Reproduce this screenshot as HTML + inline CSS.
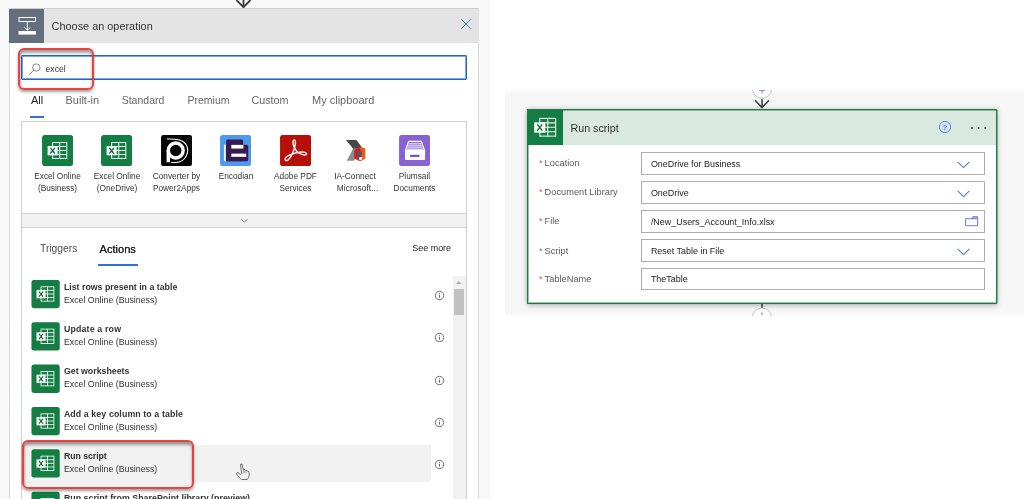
<!DOCTYPE html>
<html lang="en">
<head>
<meta charset="utf-8">
<title>Choose an operation - Run script</title>
<style>
*{box-sizing:border-box;margin:0;padding:0}
html,body{width:1024px;height:499px;overflow:hidden;background:#fff}
body{position:relative;font-family:"Liberation Sans",sans-serif;color:#333;-webkit-font-smoothing:antialiased}
.abs{position:absolute}
.t{position:absolute;white-space:nowrap;line-height:1}
#left{will-change:transform;position:absolute;left:0;top:0;width:490px;height:499px;background:#f8f8f8;overflow:hidden}
#panel{position:absolute;left:9px;top:8px;width:470px;height:500px;background:#fff;border-left:1px solid #d6d6d6;border-right:1px solid #d6d6d6}
#hdr{position:absolute;left:-1px;top:0;width:470px;height:34.5px;background:#e4e4e4;border-top:1px solid #cfcfcf}
#hico{position:absolute;left:0;top:0;width:35px;height:33.5px;background:#646e7c}
#search{position:absolute;left:21px;top:55px;width:445.5px;height:24.5px;border:1px solid #2565d0;box-shadow:inset 0 0 0 1px rgba(37,101,208,.6);background:#fff;border-radius:1px}
.red{position:absolute;border:2px solid #e8433f;border-radius:6px;box-shadow:0 2px 3px 0 rgba(0,0,0,.38), inset 0 3px 3px 0 rgba(0,0,0,.36), inset 1px 0 2px 0 rgba(0,0,0,.12)}
.tab{font-size:11px;color:#666}
#cbox{position:absolute;left:21px;top:121px;width:445.5px;height:93px;border:1px solid #cfcfcf;background:#fff}
#cbar{position:absolute;left:21px;top:213px;width:445.5px;height:14.5px;border:1px solid #cfcfcf;background:#f2f2f2}
#obox{position:absolute;left:21px;top:226.5px;width:445.5px;height:300px;border:1px solid #cfcfcf;background:#fff}
.cl{position:absolute;font-size:8.3px;line-height:12px;text-align:center;width:70px;color:#333;white-space:nowrap}
.ic{position:absolute;width:31.3px;height:31.2px;border-radius:2px}
.li{position:absolute;left:31px;width:29px;height:30px}
.lt{position:absolute;left:63.9px;font-size:8.8px;font-weight:bold;color:#333;white-space:nowrap;line-height:1}
.ls{position:absolute;left:63.9px;margin-top:.7px;font-size:8.8px;color:#333;white-space:nowrap;line-height:1}
#right{will-change:transform;position:absolute;left:505px;top:90px;width:519px;height:226px;background:linear-gradient(#fbfbfb 0,#f6f6f6 4px,#f6f6f6 221px,#fafafa 226px);overflow:hidden}
#card{position:absolute;left:22px;top:19px;width:470px;height:195px;background:#fff;border:1.5px solid #1f7a47;box-shadow:0 1px 5px rgba(0,0,0,.32)}
#card:after{content:"";position:absolute;left:0;top:0;right:-2px;bottom:0;border-right-color:rgba(31,122,71,.55);border:1px solid rgba(31,122,71,.45);pointer-events:none}
#chdr{position:absolute;left:0;top:0;width:100%;height:35px;background:#d9e9e0}
#cico{position:absolute;left:0;top:0;width:35px;height:35px;background:#147d43}
.fl{position:absolute;left:34px;margin-top:.8px;font-size:9.25px;color:#5a5a5a;white-space:nowrap;line-height:1}
.fl b{color:#dc5050;font-weight:normal;margin-right:2px}
.fi{position:absolute;left:135.5px;width:344px;height:22px;border:1px solid #adadad;background:#fff}
.fv{position:absolute;left:9.4px;top:7.2px;font-size:8.95px;color:#222;white-space:nowrap;line-height:1}
</style>
</head>
<body>
<svg width="0" height="0" style="position:absolute">
<defs>
<g id="xl">
<rect x="0" y="0" width="31" height="31" rx="2.6" fill="#147d43"/>
<g fill="none" stroke="#e9f5ee" stroke-width="1">
<rect x="10.5" y="7.5" width="14.1" height="15.8"/>
<path d="M17.6 7.5V23.3M10.5 11.45H24.6M10.5 15.4H24.6M10.5 19.35H24.6"/>
</g>
<rect x="5.5" y="11" width="10" height="9.2" fill="#f4faf6"/>
<path d="M8.3 12.8L12.7 18.4M12.7 12.8L8.3 18.4" stroke="#1c6a40" stroke-width="1.3" fill="none"/>
</g>
</defs>
</svg>

<div id="left">
<svg class="abs" style="left:233px;top:0" width="21" height="9" viewBox="0 0 21 9"><path d="M3.5 0L10.5 7.2L17.5 0M10.5 0V7" fill="none" stroke="#3c3c3c" stroke-width="1.8"/></svg>
<div id="panel">
<div id="hdr">
<div id="hico"><svg class="abs" style="left:0.7px;top:0" width="35" height="35" viewBox="0 0 35 35"><rect x="9" y="8.5" width="16.5" height="4" fill="none" stroke="#fff" stroke-width="1"/><rect x="8.5" y="22" width="17.5" height="3.6" fill="#fff"/><path d="M17.3 12.5V21M14.3 18.3L17.3 21.3L20.3 18.3" fill="none" stroke="#fff" stroke-width="1"/></svg></div>
<div class="t" id="htitle" style="left:42.6px;top:11.5px;font-size:10.9px;color:#333">Choose an operation</div>
<svg class="abs" style="left:451.5px;top:9.7px" width="10" height="10" viewBox="0 0 10 10"><path d="M0.3 0.3L9.7 9.7M9.7 0.3L0.3 9.7" stroke="#4a78d6" stroke-width="1" fill="none"/></svg>
</div>
</div>

<div id="search">
<svg class="abs" style="left:6px;top:6px" width="14" height="14" viewBox="0 0 14 14"><circle cx="8.3" cy="5.5" r="3.7" fill="none" stroke="#777" stroke-width="0.9"/><path d="M5.6 8.2L1 12.8" stroke="#777" stroke-width="1"/></svg>
<div class="t" id="sq" style="left:23.6px;top:8.5px;font-size:8.6px;color:#333">excel</div>
</div>

<div class="red" style="left:17.5px;top:48.2px;width:76.5px;height:41.4px"></div>
<div class="t tab" id="tab1" style="left:31px;top:95px;color:#222">All</div>
<div class="t tab" id="tab2" style="left:65.5px;top:95px">Built-in</div>
<div class="t tab" id="tab3" style="left:121.7px;top:95px;font-size:10.5px">Standard</div>
<div class="t tab" id="tab4" style="left:187.5px;top:95px;font-size:10.5px">Premium</div>
<div class="t tab" id="tab5" style="left:251.5px;top:95px;font-size:10.75px">Custom</div>
<div class="t tab" id="tab6" style="left:312px;top:95px">My clipboard</div>
<div class="abs" style="left:30.2px;top:116px;width:14.2px;height:1.7px;background:#2b6fe0"></div>

<div id="cbox"></div>
<svg class="ic" style="left:41.5px;top:135px" viewBox="0 0 31 31"><use href="#xl"/></svg>
<div class="cl" style="left:22.5px;top:170px">Excel Online<br>(Business)</div>
<svg class="ic" style="left:101px;top:135px" viewBox="0 0 31 31"><use href="#xl"/></svg>
<div class="cl" style="left:82.0px;top:170px">Excel Online<br>(OneDrive)</div>
<svg class="ic" style="left:160.5px;top:135px" viewBox="0 0 31 31"><rect width="31" height="31" rx="1.5" fill="#030303"/><circle cx="14.6" cy="15.4" r="7.4" fill="none" stroke="#fff" stroke-width="3.4"/><path d="M7.2 15.4V27" fill="none" stroke="#fff" stroke-width="3.4"/><path d="M5.8 4C12 4.2 20.5 3.4 24.6 9A12 12 0 0 1 14.6 27.3H10" fill="none" stroke="#fff" stroke-width="1.1"/></svg>
<div class="cl" style="left:141.5px;top:170px">Converter by<br>Power2Apps</div>
<svg class="ic" style="left:220px;top:135px" viewBox="0 0 31 31"><rect width="31" height="31" rx="2" fill="#4b9af0"/><rect x="6.1" y="4.5" width="16.8" height="21.5" rx="1.5" fill="#371a50"/><rect x="6.1" y="9.6" width="21.9" height="16.4" rx="1.5" fill="#371a50"/><rect x="3.8" y="9.6" width="1.9" height="16.4" fill="#eef3fd"/><rect x="11.2" y="9.8" width="12" height="3.7" fill="#fff"/><rect x="11.2" y="18.5" width="14.8" height="3.2" fill="#fff"/></svg>
<div class="cl" style="left:201.0px;top:170px">Encodian</div>
<svg class="ic" style="left:279.5px;top:135px" viewBox="0 0 31 31"><rect width="31" height="31" rx="2" fill="#b50f08"/><path d="M5.2 24.6C4.3 22.5 8.5 20 12 19C13.6 15.5 15.5 10 15.3 7C15.1 4.4 13 4.4 12.9 6.8C12.8 10 15 14.5 17.5 17.3C20.5 16.6 25.6 16.4 26.3 18.4C27 20.6 22.5 20.4 17.5 17.3C15.5 17.7 13.5 18.3 12 19C10 23 6.8 27.2 5.2 24.6Z" fill="none" stroke="#fdeceb" stroke-width="1.5" stroke-linejoin="round"/></svg>
<div class="cl" style="left:260.5px;top:170px">Adobe PDF<br>Services</div>
<svg class="ic" style="left:339px;top:135px" viewBox="0 0 31 31"><path d="M7 4.9H17.1L23 12.7L14.8 25.6H7.7L14 13.5Z" fill="#8c8c8c"/><path d="M7 4.9H17.1L23 12.7L14 13.5Z" fill="#474747"/><path d="M15.2 15L21 11.6L26.1 13.5V23.5L21 26L15.2 23Z" fill="#e85a10"/><path d="M15.2 15L21 11.6V26L15.2 23Z" fill="#c8202a"/><path d="M17.8 16.5L20.8 15.2L22.6 16.6V21.5L20.6 22.8L17.8 21.5Z" fill="#5d4a6c"/><path d="M19.5 22.5L23 21.5V24L20.5 25Z" fill="#fff"/></svg>
<div class="cl" style="left:320.0px;top:170px">IA-Connect<br><span style="position:relative;left:2.6px;letter-spacing:.08px">Microsoft...</span></div>
<svg class="ic" style="left:398.5px;top:135px" viewBox="0 0 31 31"><rect width="31" height="31" rx="2" fill="#8862d2"/><path d="M9.6 6.3H22.1L25.4 15.5H6.3Z" fill="#9472d6" stroke="#fff" stroke-width="1.2"/><path d="M9.5 8.8H22.2M8.9 10.8H22.9M8.2 12.8H23.5M7.6 14.6H24" stroke="#fff" stroke-width="0.9"/><rect x="5.9" y="15.5" width="19.9" height="9.3" rx="0.8" fill="#fff"/><rect x="11" y="19.7" width="9.3" height="2.1" rx="0.5" fill="#7a55c0"/></svg>
<div class="cl" style="left:379.5px;top:170px">Plumsail<br>Documents</div>
<div id="cbar"><svg class="abs" style="left:218px;top:4px" width="9" height="6" viewBox="0 0 9 6"><path d="M1.2 1.1L4.4 4.2L7.6 1.1" fill="none" stroke="#7a7a7a" stroke-width="0.9"/></svg></div>
<div id="obox"></div>
<div class="t" id="trg" style="left:40px;top:244.2px;font-size:10.3px;color:#4c4c4c">Triggers</div>
<div class="t" id="act" style="left:99.5px;top:244px;font-size:11.1px;color:#222;text-shadow:0 0 .2px #222">Actions</div>
<div class="abs" style="left:98px;top:264px;width:39.5px;height:1.6px;background:#2b6fe0"></div>
<div class="t" id="seemore" style="left:412.3px;top:243.5px;font-size:8.95px;color:#222">See more</div>
<div class="abs" style="left:23px;top:441px;width:169.5px;height:46px;border-radius:5px;background:#f2f2f2"></div>
<div class="abs" style="left:22px;top:444.7px;width:409px;height:37px;background:#f2f2f2"></div>
<svg class="li" style="top:279px" viewBox="0 0 29 30"><use href="#xl" transform="translate(0.45,0.9) scale(0.9123)"/></svg>
<div class="lt" style="top:282.5px">List rows present in a table</div>
<div class="ls" style="top:295px">Excel Online (Business)</div>
<svg class="abs" style="left:433.5px;top:290px" width="11" height="11" viewBox="0 0 11 11"><circle cx="5.5" cy="5.5" r="4.2" fill="none" stroke="#505050" stroke-width="0.8"/><path d="M5.5 4.8V7.6M5.5 3.1V3.9" stroke="#505050" stroke-width="0.9"/></svg>
<svg class="li" style="top:322px" viewBox="0 0 29 30"><use href="#xl" transform="translate(0.45,0.25) scale(0.9123)"/></svg>
<div class="lt" style="top:324.8px;letter-spacing:0.17px">Update a row</div>
<div class="ls" style="top:337.3px">Excel Online (Business)</div>
<svg class="abs" style="left:433.5px;top:332.3px" width="11" height="11" viewBox="0 0 11 11"><circle cx="5.5" cy="5.5" r="4.2" fill="none" stroke="#505050" stroke-width="0.8"/><path d="M5.5 4.8V7.6M5.5 3.1V3.9" stroke="#505050" stroke-width="0.9"/></svg>
<svg class="li" style="top:364px" viewBox="0 0 29 30"><use href="#xl" transform="translate(0.45,0.6) scale(0.9123)"/></svg>
<div class="lt" style="top:367.1px">Get worksheets</div>
<div class="ls" style="top:379.6px">Excel Online (Business)</div>
<svg class="abs" style="left:433.5px;top:374.6px" width="11" height="11" viewBox="0 0 11 11"><circle cx="5.5" cy="5.5" r="4.2" fill="none" stroke="#505050" stroke-width="0.8"/><path d="M5.5 4.8V7.6M5.5 3.1V3.9" stroke="#505050" stroke-width="0.9"/></svg>
<svg class="li" style="top:406px" viewBox="0 0 29 30"><use href="#xl" transform="translate(0.45,0.95) scale(0.9123)"/></svg>
<div class="lt" style="top:409.5px;letter-spacing:0.1px">Add a key column to a table</div>
<div class="ls" style="top:422px">Excel Online (Business)</div>
<svg class="abs" style="left:433.5px;top:417px" width="11" height="11" viewBox="0 0 11 11"><circle cx="5.5" cy="5.5" r="4.2" fill="none" stroke="#505050" stroke-width="0.8"/><path d="M5.5 4.8V7.6M5.5 3.1V3.9" stroke="#505050" stroke-width="0.9"/></svg>
<svg class="li" style="top:449px" viewBox="0 0 29 30"><use href="#xl" transform="translate(0.45,0.3) scale(0.9123)"/></svg>
<div class="lt" style="top:451.8px;letter-spacing:-0.07px">Run script</div>
<div class="ls" style="top:464.3px">Excel Online (Business)</div>
<svg class="abs" style="left:433.5px;top:459.3px" width="11" height="11" viewBox="0 0 11 11"><circle cx="5.5" cy="5.5" r="4.2" fill="none" stroke="#505050" stroke-width="0.8"/><path d="M5.5 4.8V7.6M5.5 3.1V3.9" stroke="#505050" stroke-width="0.9"/></svg>
<svg class="li" style="top:491px" viewBox="0 0 29 30"><use href="#xl" transform="translate(0.45,0.65) scale(0.9123)"/></svg>
<div class="lt" style="top:494.1px;letter-spacing:0.03px">Run script from SharePoint library (preview)</div>
<div class="ls" style="top:506.6px">Excel Online (Business)</div>
<div class="abs" style="left:452.5px;top:275.5px;width:13.2px;height:224px;background:#f1f1f1"></div>
<div class="abs" style="left:453.7px;top:288.7px;width:10px;height:26.3px;background:#c1c1c1"></div>
<svg class="abs" style="left:456.2px;top:281px" width="5.6" height="3.4" viewBox="0 0 7 4"><path d="M0 4L3.5 0L7 4Z" fill="#a8a8a8"/></svg>
<div class="red" style="left:22px;top:440px;width:171.5px;height:48.6px"></div>
<svg class="abs" style="left:234px;top:462px" width="18" height="20" viewBox="234 462 18 20"><path d="M240.5 464.4L242 464L243.5 470.2L244.7 469.4L245.7 470.6L246.9 470.2L247.7 471.4L248.7 471.5C249.7 474 249.4 477 247.2 479.5L241.8 479.5C240 478.4 237.6 475.4 236.2 473.6L237.8 472.3L240.4 474.4L241.7 473.7Z" fill="#f6f6f6" stroke="#505050" stroke-width="0.8" stroke-linejoin="round"/><path d="M243.6 470.4L244.1 473.2M245.8 470.8L246.1 473.2" stroke="#4a4a4a" stroke-width="0.6" fill="none"/></svg>
</div>

<div id="right">
<svg class="abs" style="left:244px;top:0" width="26" height="20" viewBox="0 0 26 20"><circle cx="13" cy="-1.3" r="9.6" fill="#fff" stroke="#c4c4c4" stroke-width="1"/><path d="M10 0.6H16M13 0.6V3.6" stroke="#6a86c8" stroke-width="0.9"/><path d="M6 10.2L13 17.6L20 10.2M13 9V17.4" fill="none" stroke="#3c3c3c" stroke-width="1.5"/></svg>
<svg class="abs" style="left:244px;top:213px" width="26" height="14" viewBox="0 0 26 14"><path d="M13 0.5V5" stroke="#3c3c3c" stroke-width="1.5"/><circle cx="13" cy="14.6" r="9.6" fill="#fff" stroke="#c4c4c4" stroke-width="1"/><path d="M13 9.5V12" stroke="#777" stroke-width="1"/></svg>
<div id="card">
<div id="chdr"></div>
<div id="cico"></div>
<svg class="abs" style="left:0.4px;top:0.2px;width:34.8px;height:34.8px" viewBox="0 0 31 31"><use href="#xl"/></svg>
<div class="t" id="rtitle" style="left:42.5px;top:12.5px;font-size:10.7px;color:#333">Run script</div>
<svg class="abs" style="left:410.3px;top:10px" width="14" height="14" viewBox="0 0 14 14"><circle cx="7" cy="7" r="5.6" fill="#d6e4f5" stroke="#4f7cd8" stroke-width="0.9"/><text x="7" y="9.9" font-size="8" font-weight="bold" font-family="Liberation Sans, sans-serif" fill="#4f7cd8" text-anchor="middle">?</text></svg>
<svg class="abs" style="left:442.2px;top:15.8px" width="18" height="4" viewBox="0 0 18 4"><circle cx="2" cy="2" r="1" fill="#333"/><circle cx="8.6" cy="2" r="1" fill="#333"/><circle cx="15.2" cy="2" r="1" fill="#333"/></svg>
<div class="fl" style="left:11px;top:48.4px"><b>*</b>Location</div>
<div class="fi" style="left:112.5px;top:41.5px;height:23px"><div class="fv">OneDrive for Business</div><svg class="abs" style="left:315.5px;top:8.4px" width="13" height="8" viewBox="0 0 13 8"><path d="M0.6 0.8L6.5 6.6L12.4 0.8" fill="none" stroke="#4a74d6" stroke-width="1.05"/></svg></div>
<div class="fl" style="left:11px;top:77.55px"><b>*</b>Document Library</div>
<div class="fi" style="left:112.5px;top:70.5px;height:23px"><div class="fv">OneDrive</div><svg class="abs" style="left:315.5px;top:8.4px" width="13" height="8" viewBox="0 0 13 8"><path d="M0.6 0.8L6.5 6.6L12.4 0.8" fill="none" stroke="#4a74d6" stroke-width="1.05"/></svg></div>
<div class="fl" style="left:11px;top:106.7px"><b>*</b>File</div>
<div class="fi" style="left:112.5px;top:99.5px;height:23px"><div class="fv">/New_Users_Account_Info.xlsx</div><svg class="abs" style="left:323px;top:5px" width="14" height="11" viewBox="0 0 14 11"><path d="M6.4 2.7L7.9 0.7H12.6V2.7Z" fill="#b4c6f2"/><path d="M0.6 2.7H12.6V9.7H0.6ZM6.4 2.7L7.9 0.7H12.6V2.7" fill="none" stroke="#4a69cc" stroke-width="0.85"/></svg></div>
<div class="fl" style="left:11px;top:135.8px"><b>*</b>Script</div>
<div class="fi" style="left:112.5px;top:128.5px;height:23px"><div class="fv">Reset Table in File</div><svg class="abs" style="left:315.5px;top:8.4px" width="13" height="8" viewBox="0 0 13 8"><path d="M0.6 0.8L6.5 6.6L12.4 0.8" fill="none" stroke="#4a74d6" stroke-width="1.05"/></svg></div>
<div class="fl" style="left:11px;top:164.35px"><b>*</b>TableName</div>
<div class="fi" style="left:112.5px;top:157.5px;height:22px"><div class="fv" style="top:6.6px">TheTable</div></div>
</div>
</div>
</body>
</html>
